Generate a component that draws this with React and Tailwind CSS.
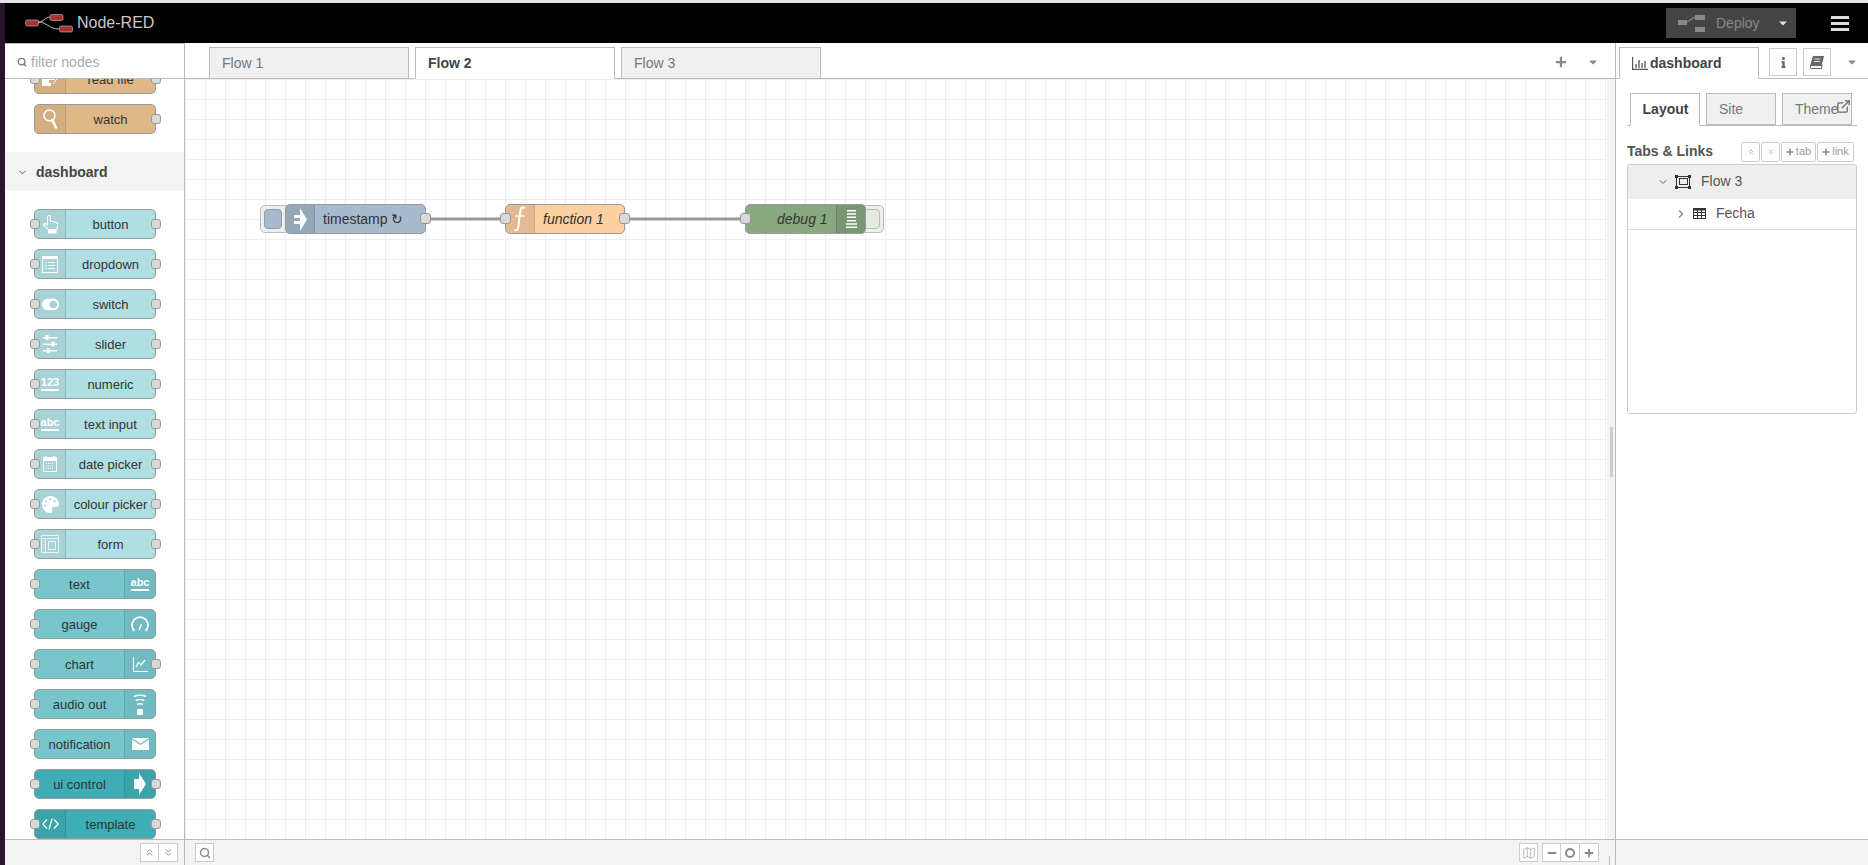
import React from 'react'
import { ChevronDown, ChevronRight, Search, ChevronsUp, ChevronsDown, ExternalLink, Map as MapIcon } from 'lucide-react'
import { FaToggleOn, FaPalette, FaInfo, FaCaretDown, FaPlus, FaMinus } from 'react-icons/fa'

const TextIcon = ({ children }) => (
  <span className="flex flex-col items-center border-b-2 border-white pb-[1px] text-[11px] font-bold leading-[11px] text-white">{children}</span>
)

const GLYPHS = {
  file: (
    <svg width="18" height="16" viewBox="0 0 18 16" fill="white">
      <path d="M1 1h9v3h-2v3h6v2H8v3h2v3H1z" />
      <path d="M12 3l4 5-4 5" fill="none" stroke="white" strokeWidth="1" />
    </svg>
  ),
  watch: (
    <svg width="15" height="20" viewBox="0 0 15 20" fill="none" stroke="white">
      <circle cx="6.5" cy="6.5" r="5.5" strokeWidth="1.5" />
      <path d="M9.5 11.5l3.5 7" strokeWidth="2.6" strokeLinecap="round" />
    </svg>
  ),
  button: (
    <svg width="15" height="19" viewBox="0 0 15 19" fill="none" stroke="white" strokeWidth="1.1">
      <path d="M4.5 10V2q0-1.5 1.4-1.5T7.4 2v4.5h3.4q.9 0 1.2.8l1.8.4q.8.2.8 1.2v3.6L13 14.500H5.500L1 10.500q-.6-.8 0-1.500t1.600-.200z" />
      <path d="M5 15h8.500v3.500H5z" fill="white" stroke="none" />
    </svg>
  ),
  dropdown: (
    <svg width="16" height="17" viewBox="0 0 16 17" fill="none" stroke="white">
      <rect x="0.5" y="0.5" width="15" height="16" />
      <path d="M0 1.500h16" strokeWidth="3" />
      <path d="M3 6.500h1.500M6 6.500h7M3 9.500h1.500M6 9.500h7M3 12.500h1.500M6 12.500h7" strokeWidth="1" />
    </svg>
  ),
  switch: <FaToggleOn size={17} color="white" />,
  slider: (
    <svg width="14" height="18" viewBox="0 0 14 18" fill="white">
      <path d="M0 2h14v1.500H0zM0 8.500h14V10H0zM0 15h14v1.500H0z" />
      <path d="M2.500 0h3v5h-3zM8.500 6.500h3v5h-3zM4 13h3v5H4z" />
    </svg>
  ),
  numeric: <TextIcon>123</TextIcon>,
  text: <TextIcon>abc</TextIcon>,
  date: (
    <svg width="14" height="16" viewBox="0 0 14 16" fill="none" stroke="white">
      <rect x="0.500" y="1.500" width="13" height="14" />
      <path d="M0 3.500h14" strokeWidth="3" />
      <path d="M3 0v2M11 0v2" strokeWidth="1.500" />
      <path d="M3 7.500h8M3 10h8M3 12.500h8" strokeWidth="1" strokeDasharray="1 1" />
    </svg>
  ),
  palette: <FaPalette size={17} color="white" />,
  form: (
    <svg width="18" height="18" viewBox="0 0 18 18" fill="none" stroke="white" strokeOpacity="0.75">
      <rect x="0.5" y="0.5" width="17" height="17" />
      <path d="M0.5 3.5h17M4.5 3.5v14" />
      <rect x="7.5" y="6.5" width="7" height="8" />
      <path d="M1.5 7h2M1.5 10h2M1.5 13h2" />
    </svg>
  ),
  gauge: (
    <svg width="18" height="16" viewBox="0 0 18 16" fill="none" stroke="white" strokeWidth="1.8">
      <path d="M3.5 15A8 8 0 1 1 14.5 15" />
      <path d="M8 14l2.5-6" strokeWidth="1.5" />
    </svg>
  ),
  chart: (
    <svg width="15" height="15" viewBox="0 0 15 15" fill="none" stroke="white" strokeWidth="1.1">
      <path d="M.5 0v14.500H15" />
      <path d="M3 10l2.500-4.500 2.500 2.500 4-5" strokeWidth="1.300" />
    </svg>
  ),
  audio: (
    <svg width="14" height="21" viewBox="0 0 14 21" fill="none" stroke="white" strokeWidth="1.6">
      <path d="M1 2.5q6-2.5 12 0M2.5 6.5q4.5-2 9 0M4 10.5q3-1.5 6 0" />
      <rect x="4" y="15" width="6" height="6" rx="1" fill="white" stroke="none" />
    </svg>
  ),
  mail: (
    <svg width="17" height="12" viewBox="0 0 17 12" fill="white">
      <path d="M0 0h17L8.500 5.500zM0 1.500l8.500 5.500L17 1.500V12H0z" />
    </svg>
  ),
  arrow: (
    <svg width="12" height="22" viewBox="0 0 12 22" fill="white">
      <path d="M0 6h5V0l7 11-7 11v-6H0z" />
    </svg>
  ),
  code: (
    <svg width="17" height="12" viewBox="0 0 17 12" fill="none" stroke="white" strokeWidth="1.200">
      <path d="M5 1.500L.8 6 5 10.500M12 1.500L16.200 6 12 10.500M10 .5L7 11.500" />
    </svg>
  ),
  inject: (
    <svg width="13" height="23" viewBox="0 0 13 23" fill="white">
      <path d="M0 7h6V0l7 11.500L6 23v-7H0v-3h6v-3H0z" />
    </svg>
  ),
  func: (
    <svg width="14" height="26" viewBox="0 0 14 26" fill="none" stroke="white" strokeWidth="2">
      <path d="M12 2C8 0 7.5 3 7 7l-1.5 13c-.5 4-1.5 5-4 4" />
      <path d="M2.5 10h9" strokeWidth="1.500" />
    </svg>
  ),
  debug: (
    <svg width="11" height="18" viewBox="0 0 11 18" fill="white">
      <path d="M1 0h9v1.5H1zM1 3.3h9v1.5H1zM1 6.6h9v1.5H1zM1 9.9h9v1.5H1zM0 13.2h11v1.5H0zM0 16.5h11V18H0z" />
    </svg>
  ),
}

const Port = ({ side }) => (
  <span className={`absolute top-[9px] size-[10px] rounded-[3px] border border-[#999] bg-[#d9d9d9] ${side === 'left' ? 'left-[-5px]' : 'right-[-6px]'}`} />
)

function PaletteNode({ label, color, icon, inPort = true, outPort = true, iconRight = false }) {
  return (
    <div className={`relative h-[30px] w-[122px] shrink-0 rounded-[5px] border border-[#999] ${color}`}>
      {inPort && <Port side="left" />}
      {outPort && <Port side="right" />}
      <div className={`flex h-full overflow-hidden rounded-[4px] ${iconRight ? 'flex-row-reverse' : ''}`}>
        <div className={`flex h-full w-[31px] shrink-0 items-center justify-center border-black/10 bg-black/5 ${iconRight ? 'border-l' : 'border-r'}`}>
          {GLYPHS[icon]}
        </div>
        <div className="flex-1 whitespace-nowrap text-center text-[13px] leading-[30px] text-[#333]">{label}</div>
      </div>
    </div>
  )
}

const LIGHT = 'bg-[#b0dfe3]'
const MID = 'bg-[#77c6cc]'
const DARK = 'bg-[#3fadb5]'

const DASHBOARD_NODES = [
  { label: 'button', icon: 'button', color: LIGHT },
  { label: 'dropdown', icon: 'dropdown', color: LIGHT },
  { label: 'switch', icon: 'switch', color: LIGHT },
  { label: 'slider', icon: 'slider', color: LIGHT },
  { label: 'numeric', icon: 'numeric', color: LIGHT },
  { label: 'text input', icon: 'text', color: LIGHT },
  { label: 'date picker', icon: 'date', color: LIGHT },
  { label: 'colour picker', icon: 'palette', color: LIGHT },
  { label: 'form', icon: 'form', color: LIGHT },
  { label: 'text', icon: 'text', color: MID, iconRight: true, outPort: false },
  { label: 'gauge', icon: 'gauge', color: MID, iconRight: true, outPort: false },
  { label: 'chart', icon: 'chart', color: MID, iconRight: true },
  { label: 'audio out', icon: 'audio', color: MID, iconRight: true, outPort: false },
  { label: 'notification', icon: 'mail', color: MID, iconRight: true, outPort: false },
  { label: 'ui control', icon: 'arrow', color: DARK, iconRight: true },
  { label: 'template', icon: 'code', color: DARK },
]

const FootButton = ({ children, className = '' }) => (
  <button type="button" className={`flex h-[19px] w-[19px] items-center justify-center border border-[#ccc] bg-white text-[#888] ${className}`}>
    {children}
  </button>
)

function Palette() {
  return (
    <aside className="flex h-full w-[180px] shrink-0 flex-col border-r border-[#bbb] bg-white">
      <div className="flex h-[36px] shrink-0 items-center gap-[4px] border-t border-b border-[#bbb] pl-[12px] pt-[2px] text-[14px] text-[#aaa]">
        <Search size={10} strokeWidth={3} className="text-[#777]" />
        <span>filter nodes</span>
      </div>
      <div className="min-h-0 flex-1 overflow-hidden">
        <div className="mt-[-15px] flex flex-col gap-[10px] pl-[29px]">
          <PaletteNode label="read file" icon="file" color="bg-[#deb887]" />
          <PaletteNode label="watch" icon="watch" color="bg-[#deb887]" inPort={false} />
        </div>
        <div className="mt-[18px] flex h-[39px] items-center gap-[8px] bg-[#f3f3f3] pl-[12px] pt-[1px] text-[14px] font-bold text-[#444]">
          <ChevronDown size={11} strokeWidth={2} className="text-[#555]" />
          <span>dashboard</span>
        </div>
        <div className="mt-[18px] flex flex-col gap-[10px] pl-[29px]">
          {DASHBOARD_NODES.map((n) => <PaletteNode key={n.label + n.icon} {...n} />)}
        </div>
      </div>
      <div className="flex h-[26px] shrink-0 items-center justify-end border-t border-[#bbb] bg-[#f3f3f3] pr-[6px]">
        <FootButton><ChevronsUp size={11} /></FootButton>
        <FootButton className="border-l-0"><ChevronsDown size={11} /></FootButton>
      </div>
    </aside>
  )
}

function FlowNode({ left, width, color, icon, iconRight, label, italic, inPort, outPort, textClass }) {
  return (
    <div className={`absolute top-[125px] h-[30px] rounded-[5px] border border-[#999] ${color}`} style={{ left, width }}>
      {inPort && <span className="absolute left-[-6px] top-[8px] size-[11px] rounded-[3px] border border-[#999] bg-[#d9d9d9]" />}
      {outPort && <span className="absolute right-[-6px] top-[8px] size-[11px] rounded-[3px] border border-[#999] bg-[#d9d9d9]" />}
      <div className={`flex h-full overflow-hidden rounded-[4px] ${iconRight ? 'flex-row-reverse' : ''}`}>
        <div className={`flex h-full w-[29px] shrink-0 items-center justify-center border-black/10 bg-black/10 ${iconRight ? 'border-l' : 'border-r'}`}>
          {GLYPHS[icon]}
        </div>
        <div className={`flex-1 whitespace-nowrap text-[14px] leading-[28px] text-[#333] ${italic ? 'italic' : ''} ${textClass}`}>{label}</div>
      </div>
    </div>
  )
}

function Canvas() {
  return (
    <div className="relative min-h-0 flex-1 overflow-hidden bg-white bg-[linear-gradient(#eee_1px,transparent_1px),linear-gradient(90deg,#eee_1px,transparent_1px)] bg-[size:20px_20px]">
      {/* wires */}
      <svg className="absolute left-0 top-0" width="800" height="200" fill="none">
        <path d="M240 140H320M440 140H560" stroke="#999" strokeWidth="3" />
      </svg>
      {/* inject button */}
      <div className="absolute left-[75px] top-[126px] flex h-[28px] w-[30px] items-center rounded-[5px] border border-[#bbb] bg-[#eee] pl-[3px]">
        <span className="h-[20px] w-[18px] rounded-[4px] border border-[#999] bg-[#a6bbcf]" />
      </div>
      {/* debug button */}
      <div className="absolute left-[675px] top-[126px] flex h-[28px] w-[24px] items-center justify-end rounded-[5px] border border-[#bbb] bg-[#eee] pr-[3px]">
        <span className="h-[20px] w-[17px] rounded-[4px] border border-[#bbb] bg-[#e3ebe0]" />
      </div>
      <FlowNode left={100} width={141} color="bg-[#a6bbcf]" icon="inject" label="timestamp ↻" outPort textClass="pl-[8px]" />
      <FlowNode left={320} width={120} color="bg-[#fdd0a2]" icon="func" label="function 1" italic inPort outPort textClass="pl-[8px]" />
      <FlowNode left={560} width={121} color="bg-[#87a980]" icon="debug" iconRight label="debug 1" italic inPort textClass="pl-[31px]" />
    </div>
  )
}

function WorkspaceTab({ label, active }) {
  return (
    <div className={`h-[32px] w-[200px] border border-[#bbb] pl-[12px] text-[14px] leading-[31px] ${active ? 'border-b-white bg-white font-bold text-[#444]' : 'bg-[#f0f0f0] text-[#777]'}`}>
      {label}
    </div>
  )
}

function Workspace() {
  return (
    <main className="flex h-full w-[1422px] shrink-0 flex-col">
      <div className="flex h-[36px] shrink-0 items-end border-b border-[#bbb] pl-[24px]">
        <div className="mb-[-1px] flex gap-[6px]">
          <WorkspaceTab label="Flow 1" />
          <WorkspaceTab label="Flow 2" active />
          <WorkspaceTab label="Flow 3" />
        </div>
        <div className="mb-[10px] ml-auto flex items-center gap-[20px] pr-[8px] text-[#888]">
          <FaPlus size={12} />
          <FaCaretDown size={12} />
        </div>
      </div>
      <Canvas />
      <div className="flex h-[26px] shrink-0 items-center border-t border-[#bbb] bg-[#f3f3f3] pl-[10px] pr-[8px]">
        <FootButton><Search size={12} strokeWidth={3} /></FootButton>
        <div className="ml-auto flex items-center">
          <FootButton className="mr-[4px]"><MapIcon size={14} strokeWidth={1} /></FootButton>
          <FootButton><FaMinus size={10} /></FootButton>
          <FootButton className="border-l-0"><span className="size-[10px] rounded-full border-2 border-[#888]" /></FootButton>
          <FootButton className="border-l-0"><FaPlus size={10} /></FootButton>
        </div>
      </div>
    </main>
  )
}

function SmallButton({ children, className = '' }) {
  return (
    <button type="button" className={`flex h-[20px] items-center justify-center gap-[2px] rounded-[2px] border border-[#ccc] bg-white text-[11px] text-[#999] ${className}`}>
      {children}
    </button>
  )
}

function Separator() {
  return (
    <div className="flex h-full w-[9px] shrink-0 flex-col border-r border-[#bbb]">
      <div className="flex h-[36px] shrink-0 border-b border-[#bbb]" />
      <div className="flex flex-1 bg-[#f3f3f3] pl-[3px] pt-[348px]">
        <span className="h-[50px] w-[3px] bg-[#ccc]" />
      </div>
      <div className="flex h-[26px] shrink-0 items-end border-t border-[#bbb] bg-[#f3f3f3] pl-[2px]">
        <span className="h-[9px] w-px bg-[#bbb]" />
      </div>
    </div>
  )
}

function RightSidebar() {
  return (
    <aside className="flex h-full min-w-0 flex-1 flex-col bg-white">
      <div className="flex h-[36px] shrink-0 items-end border-b border-[#bbb] pl-[3px]">
        <div className="mb-[-1px] flex h-[32px] w-[140px] items-center gap-[2px] border border-[#bbb] border-b-white bg-white pl-[12px] text-[14px] font-bold text-[#444]">
          <svg width="16" height="13" viewBox="0 0 16 13" fill="none" stroke="#555">
            <path d="M0.5 0v12.5H16M4 11V7M7 11V3M10 11V6M13 11V4" strokeWidth="1.3" />
          </svg>
          <span>dashboard</span>
        </div>
        <div className="mb-[2px] ml-[10px] flex gap-[6px]">
          <div className="flex size-[28px] items-center justify-center border border-[#ccc] text-[#666]"><FaInfo size={11} /></div>
          <div className="flex size-[28px] items-center justify-center border border-[#ccc] text-[#666]">
            <svg width="14" height="13" viewBox="0 0 14 13" fill="#666">
              <path d="M3 0h11l-2.5 10H1.5C0.5 10 0.5 12 1.5 12H11l1-3.5 .8.5L11.8 13H1.5C-.5 13-.5 10 .5 8z" />
              <path d="M4.5 3h6M4 5.5h6" stroke="white" strokeWidth="0.8" />
            </svg>
          </div>
        </div>
        <FaCaretDown size={12} className="mb-[10px] ml-[15px] text-[#888]" />
      </div>

      <div className="relative mx-[11px] mt-[14px] flex h-[33px] w-[230px] shrink-0 gap-[6px] border-b border-[#bbb] pl-[3px]">
        <div className="mb-[-1px] h-[33px] w-[70px] border border-[#bbb] border-b-white bg-white pl-[1px] text-center text-[14px] font-bold leading-[31px] text-[#444]">Layout</div>
        <div className="h-[32px] w-[70px] border border-[#bbb] bg-[#f0f0f0] pl-[12px] text-[14px] leading-[31px] text-[#777]">Site</div>
        <div className="h-[32px] w-[70px] border border-[#bbb] bg-[#f0f0f0] pl-[12px] text-[14px] leading-[31px] text-[#777]">Theme</div>
        <ExternalLink size={15} className="absolute right-[6px] top-[6px] text-[#666]" />
      </div>

      <div className="mx-[11px] mt-[15px] flex h-[21px] w-[227px] shrink-0 items-center">
        <span className="text-[14px] font-bold text-[#555]">Tabs &amp; Links</span>
        <div className="ml-auto flex gap-[1px]">
          <SmallButton className="w-[19px]"><ChevronsUp size={8} /></SmallButton>
          <SmallButton className="w-[19px]"><ChevronsDown size={8} /></SmallButton>
          <SmallButton className="w-[35px]"><FaPlus size={8} className="text-[#888]" />tab</SmallButton>
          <SmallButton className="w-[37px]"><FaPlus size={8} className="text-[#888]" />link</SmallButton>
        </div>
      </div>

      <div className="mx-[11px] mt-[2px] h-[250px] w-[230px] shrink-0 overflow-hidden rounded-[3px] border border-[#ccc] text-[14px] text-[#555]">
        <div className="flex h-[34px] items-center bg-[#eee] pb-[1px] pl-[29px]">
          <ChevronDown size={12} className="text-[#666]" />
          <svg width="16" height="14" viewBox="0 0 16 14" fill="none" stroke="#333" className="ml-[6px]">
            <rect x="1.5" y="1.5" width="13" height="11" />
            <rect x="4.5" y="3.5" width="8" height="6" />
            <path d="M0 0h3v3H0zM13 0h3v3h-3zM0 11h3v3H0zM13 11h3v3h-3z" fill="#333" stroke="none" />
          </svg>
          <span className="ml-[10px]">Flow 3</span>
        </div>
        <div className="flex h-[31px] items-center border-b border-[#ddd] pb-[1px] pl-[47px]">
          <ChevronRight size={12} strokeWidth={3} className="text-[#888]" />
          <svg width="13" height="11" viewBox="0 0 13 11" fill="none" stroke="#333" className="ml-[6px]">
            <rect x="0.5" y="0.5" width="12" height="10" />
            <path d="M0 1.500h13" strokeWidth="2" />
            <path d="M0 4.500h13M0 7.500h13M4.500 0v11M8.500 0v11" />
          </svg>
          <span className="ml-[10px]">Fecha</span>
        </div>
      </div>

      <div className="mt-auto h-[26px] shrink-0 border-t border-[#bbb] bg-[#f3f3f3]" />
    </aside>
  )
}

function Header() {
  return (
    <header className="flex h-[40px] shrink-0 items-center bg-black">
      <svg width="49" height="19" viewBox="0 0 49 19" fill="none" className="ml-[20px]">
        <path d="M13 8C20 8 19 3 26 3M13 8C22 8 24 15 34 15" stroke="#bbb" strokeWidth="1" />
        <rect x="0.5" y="6" width="13" height="6" rx="1.5" fill="#a83232" stroke="#ddd" strokeWidth="0.5" />
        <rect x="25" y="0.5" width="13" height="6" rx="1.5" fill="#a83232" stroke="#ddd" strokeWidth="0.5" />
        <rect x="34.5" y="12" width="13" height="6" rx="1.5" fill="#a83232" stroke="#ddd" strokeWidth="0.5" />
      </svg>
      <span className="ml-[3px] text-[16px] text-[#c7c7c7]">Node-RED</span>
      <div className="ml-auto flex h-[30px] w-[130px] items-center bg-[#444] pl-[12px] text-[14px] text-[#888]">
        <svg width="27" height="18" viewBox="0 0 27 18" fill="#888">
          <path d="M0 6h9v5H0zM17 1h10v5H17zM17 13h10v5H17z" />
          <path d="M9 8l8-5" stroke="#888" fill="none" strokeWidth="1.200" />
        </svg>
        <span className="ml-[11px]">Deploy</span>
        <FaCaretDown size={12} className="ml-[17px] text-[#ddd]" />
      </div>
      <div className="ml-[35px] mr-[19px] flex w-[18px] flex-col gap-[3px]">
        <span className="h-[3px] bg-[#ddd]" />
        <span className="h-[3px] bg-[#ddd]" />
        <span className="h-[3px] bg-[#ddd]" />
      </div>
    </header>
  )
}

export default function App() {
  return (
    <div className="flex h-[865px] w-full flex-col overflow-hidden bg-white font-['Liberation_Sans',Arial,sans-serif]">
      <div className="h-[3px] shrink-0 bg-[#e4e4e4]" />
      <div className="flex min-h-0 flex-1">
        <div className="w-[5px] shrink-0 bg-[#2c142c]" />
        <div className="flex min-w-0 flex-1 flex-col">
          <Header />
          <div className="flex min-h-0 flex-1">
            <Palette />
            <Workspace />
            <Separator />
            <RightSidebar />
          </div>
        </div>
      </div>
    </div>
  )
}
